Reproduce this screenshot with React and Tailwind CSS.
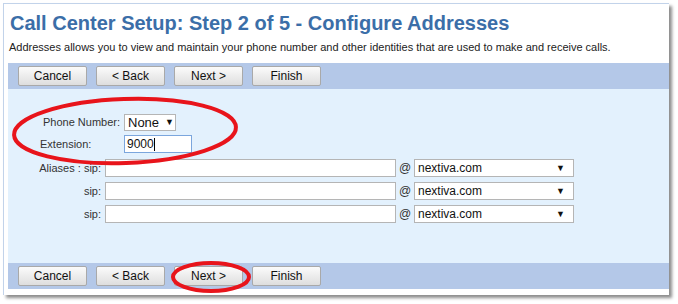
const font = { fontFamily: '"Liberation Sans", Arial, sans-serif' };

function Btn({ label }) {
  return (
    <button className="w-[69px] h-[20px] border border-[#a9a9a9] rounded-[2px] bg-gradient-to-b from-[#fbfbfb] to-[#dedede] text-[12px] leading-none text-[#111]">
      {label}
    </button>
  );
}

function ButtonBar() {
  return (
    <div className="h-[26px] bg-[#b4c8e8] flex items-center gap-[9px] pl-[10px]">
      <Btn label="Cancel" />
      <Btn label="< Back" />
      <Btn label="Next >" />
      <Btn label="Finish" />
    </div>
  );
}

function Arrow() {
  return <span className="text-[9px] leading-none text-[#111]">▼</span>;
}

function DomainSelect() {
  return (
    <div className="w-[160px] h-[18px] bg-white border border-[#b5b5b5] flex items-center justify-between pl-[3px] pr-[8px] text-[12px] text-[#111]">
      <span>nextiva.com</span>
      <Arrow />
    </div>
  );
}

function AliasRow({ label }) {
  return (
    <div className="flex items-center h-[18px]">
      <div className="w-[97px] pr-[4px] text-right text-[11px] text-[#333]">{label}</div>
      <div className="w-[291px] h-[18px] bg-white border border-[#b5b5b5]" />
      <span className="w-[18px] text-center text-[12px] text-[#333]">@</span>
      <DomainSelect />
    </div>
  );
}

export default function App() {
  return (
    <div className="w-[678px] h-[304px] bg-white pt-[3px] pl-[3px]" style={font}>
      <div className="relative w-[666px] h-[292px] bg-white border-t border-l border-[#c2d3ea] shadow-[3px_3px_3px_rgba(0,0,0,0.45)] pl-[4px] pt-[7px]">
        <h1 className="pl-[2px] text-[20px] leading-[24px] font-bold text-[#3b6ea8]">
          Call Center Setup: Step 2 of 5 - Configure Addresses
        </h1>
        <p className="mt-[4px] pl-[1px] text-[11px] leading-[16px] text-[#222]">
          Addresses allows you to view and maintain your phone number and other identities that are used to make and receive calls.
        </p>
        <div className="mt-[8px]">
          <ButtonBar />
        </div>
        <div className="h-[174px] bg-[#e3f1fd] pt-[25px] flex flex-col">
          <div className="flex items-center h-[17px]">
            <div className="w-[116px] pl-[35px] text-[11px] text-[#333]">Phone Number:</div>
            <div className="w-[52px] h-[17px] bg-white border border-[#b5b5b5] flex items-center gap-[6px] pl-[3px] text-[13px] text-[#111]">
              <span>None</span>
              <Arrow />
            </div>
          </div>
          <div className="flex items-center h-[18px] mt-[4px]">
            <div className="w-[116px] pl-[32px] text-[11px] text-[#333]">Extension:</div>
            <div className="w-[68px] h-[18px] bg-white border border-[#7ba6dd] flex items-center pl-[2px] text-[12px] text-[#111]">
              9000<span className="w-px h-[13px] bg-black" />
            </div>
          </div>
          <div className="mt-[6px] flex flex-col gap-[5px]">
            <AliasRow label="Aliases : sip:" />
            <AliasRow label="sip:" />
            <AliasRow label="sip:" />
          </div>
        </div>
        <ButtonBar />
        <svg className="absolute pointer-events-none" width="678" height="304" viewBox="0 0 678 304" style={{ left: -4, top: -4 }}>
          <ellipse cx="125" cy="131" rx="111" ry="32" fill="none" stroke="#e8141b" strokeWidth="4" transform="rotate(-2 125 131)" />
          <ellipse cx="211" cy="277" rx="38" ry="14" fill="none" stroke="#e8141b" strokeWidth="4" />
        </svg>
      </div>
    </div>
  );
}
